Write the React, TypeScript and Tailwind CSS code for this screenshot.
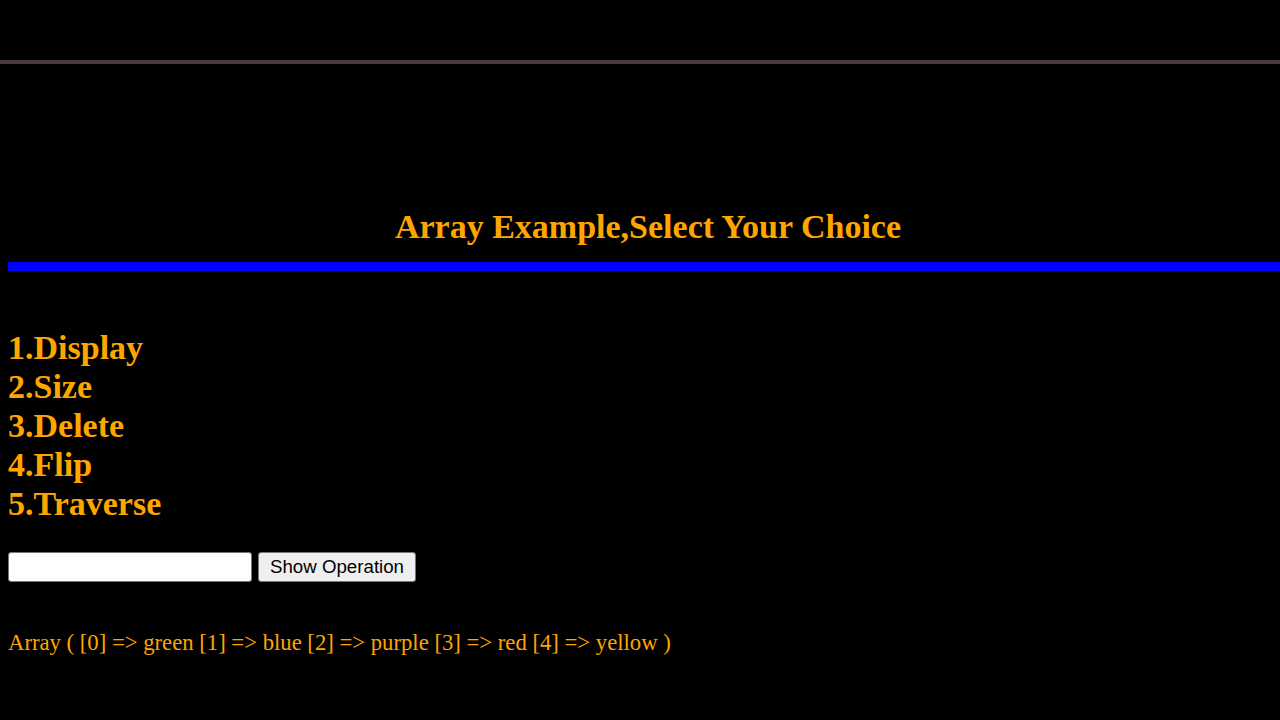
export default function App() {
  const items = ['1.Display', '2.Size', '3.Delete', '4.Flip', '5.Traverse'];
  return (
    <div className="min-h-[720px] w-[1280px] overflow-hidden bg-black font-['Liberation_Serif',serif] text-[#ffa500]">
      <div className="h-[60px]" />
      <div className="h-[4px] bg-[#4e3a3a]" />
      <div className="pl-[8px]">
        <div className="h-[141px]" />
        <h1 className="w-[1280px] text-center text-[34px] font-bold leading-[44px]">
          Array Example,Select Your Choice
        </h1>
        <div className="mt-[13px] h-[9px] w-[1280px] bg-[#0000ff]" />
        <div className="h-[57px]" />
        <ul className="text-[34px] font-bold leading-[39px]">
          {items.map((it) => (
            <li key={it}>{it}</li>
          ))}
        </ul>
        <div className="mt-[29px] flex items-center gap-[6px]">
          <input
            type="text"
            className="h-[30px] w-[244px] rounded-[3px] border border-[#767676] bg-white"
          />
          <button className="h-[30px] rounded-[3px] border border-[#767676] bg-[#efefef] px-[11px] font-['Liberation_Sans',sans-serif] text-[18.7px] leading-none text-black">
            Show Operation
          </button>
        </div>
        <p className="mt-[48px] text-[22.7px] leading-[26px]">
          Array ( [0] =&gt; green [1] =&gt; blue [2] =&gt; purple [3] =&gt; red [4] =&gt; yellow )
        </p>
      </div>
    </div>
  );
}
